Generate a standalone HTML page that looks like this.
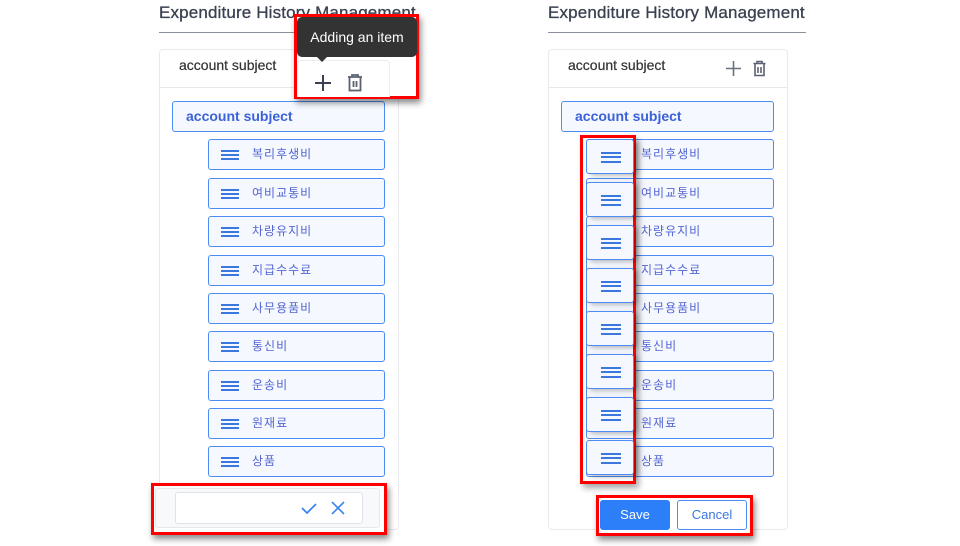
<!DOCTYPE html>
<html><head><meta charset="utf-8"><style>
*{box-sizing:border-box;margin:0;padding:0}
body{width:960px;height:546px;background:#fff;position:relative;overflow:hidden;font-family:"Liberation Sans","Noto Sans CJK KR",sans-serif}
.a{position:absolute}
.title{font-size:17px;color:#3a4150;font-weight:500;letter-spacing:0.15px;-webkit-text-stroke:0.3px #3a4150}
.line{height:1px;background:#8a909c}
.card{border:1px solid #e8eaee;border-radius:4px;background:#fff}
.hdr{font-size:14px;color:#333;-webkit-text-stroke:0.2px #333}
.hline{height:1px;background:#e6e8ec}
.parent{border:1px solid #4d8cf5;border-radius:3px;background:#f5f8fe;color:#3b62d9;font-size:14px;font-weight:bold;padding-left:13px;line-height:29px}
.child{border:1px solid #4d8cf5;border-radius:3px;background:#f5f8fe;color:#5466d2;font-size:12px;line-height:29px;letter-spacing:1px}
.ham{position:absolute;width:18px;height:10px;border-top:2px solid #3a78e0;border-bottom:2px solid #3a78e0}
.ham:after{content:"";position:absolute;left:0;right:0;top:2px;height:2px;background:#3a78e0}
.red{border:3px solid #f00;box-shadow:2px 4px 6px rgba(0,0,0,.45)}
.handle{border:1px solid #4d8cf5;border-radius:3px;background:#f5f8fe;width:48px;height:35px;box-shadow:4px 2px 5px rgba(0,0,0,.25)}
</style></head><body>

<!-- LEFT -->
<div class="a title" style="left:159px;top:3px">Expenditure History Management</div>
<div class="a line" style="left:159px;top:32px;width:256px"></div>
<div class="a card" style="left:159px;top:49px;width:240px;height:481px"></div>
<div class="a hdr" style="left:179px;top:57px">account subject</div>
<div class="a hline" style="left:160px;top:87px;width:238px"></div>
<div class="a parent" style="left:172px;top:101px;width:213px;height:31px">account subject</div>

<div class="a child" style="left:208px;top:139px;width:177px;height:31px"><span class="ham" style="left:12px;top:10px"></span><span class="a" style="left:43px">복리후생비</span></div>
<div class="a child" style="left:208px;top:178px;width:177px;height:31px"><span class="ham" style="left:12px;top:10px"></span><span class="a" style="left:43px">여비교통비</span></div>
<div class="a child" style="left:208px;top:216px;width:177px;height:31px"><span class="ham" style="left:12px;top:10px"></span><span class="a" style="left:43px">차량유지비</span></div>
<div class="a child" style="left:208px;top:255px;width:177px;height:31px"><span class="ham" style="left:12px;top:10px"></span><span class="a" style="left:43px">지급수수료</span></div>
<div class="a child" style="left:208px;top:293px;width:177px;height:31px"><span class="ham" style="left:12px;top:10px"></span><span class="a" style="left:43px">사무용품비</span></div>
<div class="a child" style="left:208px;top:331px;width:177px;height:31px"><span class="ham" style="left:12px;top:10px"></span><span class="a" style="left:43px">통신비</span></div>
<div class="a child" style="left:208px;top:370px;width:177px;height:31px"><span class="ham" style="left:12px;top:10px"></span><span class="a" style="left:43px">운송비</span></div>
<div class="a child" style="left:208px;top:408px;width:177px;height:31px"><span class="ham" style="left:12px;top:10px"></span><span class="a" style="left:43px">원재료</span></div>
<div class="a child" style="left:208px;top:446px;width:177px;height:31px"><span class="ham" style="left:12px;top:10px"></span><span class="a" style="left:43px">상품</span></div>

<!-- tooltip popup -->
<div class="a red" style="left:294px;top:14px;width:125px;height:85px;background:#fff"></div>
<div class="a" style="left:297px;top:60px;width:93px;height:37px;background:#fff;border:1px solid #eceef1;border-bottom:none;border-radius:4px 4px 0 0"></div>
<div class="a" style="left:297px;top:17px;width:120px;height:40px;background:#333;border-radius:5px;color:#fff;font-size:14px;line-height:40px;text-align:center">Adding an item</div>
<div class="a" style="left:316px;top:56px;width:0;height:0;border-left:6px solid transparent;border-right:6px solid transparent;border-top:6px solid #333"></div>
<svg class="a" style="left:313px;top:73px" width="20" height="20"><path d="M10 2V18M2 10H18" stroke="#3a4150" stroke-width="2"/></svg>
<svg class="a" style="left:346px;top:73px" width="18" height="20"><path d="M2 4H16M6 4V2H12V4M3.5 4V17.5H14.5V4M7.5 8V14M10.5 8V14" stroke="#5a6170" stroke-width="1.8" fill="none"/></svg>

<!-- bottom input -->
<div class="a red" style="left:151px;top:483px;width:236px;height:52px;background:#fff"></div>
<div class="a" style="left:155px;top:488px;width:225px;height:40px;background:#f8f9fa;border:1px solid #e6e8ec;border-radius:3px"></div>
<div class="a" style="left:175px;top:492px;width:188px;height:32px;background:#fff;border:1px solid #dfe2e6;border-radius:3px"></div>
<svg class="a" style="left:300px;top:500px" width="18" height="16"><path d="M2 8L7 13L16 4" stroke="#3a86f0" stroke-width="1.8" fill="none"/></svg>
<svg class="a" style="left:330px;top:500px" width="16" height="16"><path d="M2 2L14 14M14 2L2 14" stroke="#3a86f0" stroke-width="1.6" fill="none"/></svg>

<!-- RIGHT -->
<div class="a title" style="left:548px;top:3px">Expenditure History Management</div>
<div class="a line" style="left:548px;top:32px;width:258px"></div>
<div class="a card" style="left:548px;top:49px;width:240px;height:481px"></div>
<div class="a hdr" style="left:568px;top:57px">account subject</div>
<svg class="a" style="left:725px;top:60px" width="17" height="17"><path d="M8.5 1V16M1 8.5H16" stroke="#6a707c" stroke-width="1.6"/></svg>
<svg class="a" style="left:752px;top:60px" width="15" height="17"><path d="M1.5 3.5H13.5M5 3.5V1.5H10V3.5M3 3.5V15.5H12V3.5M6 7V13M9 7V13" stroke="#5a6170" stroke-width="1.6" fill="none"/></svg>
<div class="a hline" style="left:549px;top:87px;width:238px"></div>
<div class="a parent" style="left:561px;top:101px;width:213px;height:31px">account subject</div>

<div class="a child" style="left:586px;top:139px;width:188px;height:31px"><span class="a" style="left:54px">복리후생비</span></div>
<div class="a child" style="left:586px;top:178px;width:188px;height:31px"><span class="a" style="left:54px">여비교통비</span></div>
<div class="a child" style="left:586px;top:216px;width:188px;height:31px"><span class="a" style="left:54px">차량유지비</span></div>
<div class="a child" style="left:586px;top:255px;width:188px;height:31px"><span class="a" style="left:54px">지급수수료</span></div>
<div class="a child" style="left:586px;top:293px;width:188px;height:31px"><span class="a" style="left:54px">사무용품비</span></div>
<div class="a child" style="left:586px;top:331px;width:188px;height:31px"><span class="a" style="left:54px">통신비</span></div>
<div class="a child" style="left:586px;top:370px;width:188px;height:31px"><span class="a" style="left:54px">운송비</span></div>
<div class="a child" style="left:586px;top:408px;width:188px;height:31px"><span class="a" style="left:54px">원재료</span></div>
<div class="a child" style="left:586px;top:446px;width:188px;height:31px"><span class="a" style="left:54px">상품</span></div>

<div class="a red" style="left:580px;top:135px;width:56px;height:349px;box-shadow:3px 4px 6px rgba(0,0,0,.35)"></div>
<div class="a handle" style="left:586px;top:139px"><span class="ham" style="left:14px;top:12px;width:20px;height:11px"></span></div>
<div class="a handle" style="left:586px;top:182px"><span class="ham" style="left:14px;top:12px;width:20px;height:11px"></span></div>
<div class="a handle" style="left:586px;top:225px"><span class="ham" style="left:14px;top:12px;width:20px;height:11px"></span></div>
<div class="a handle" style="left:586px;top:268px"><span class="ham" style="left:14px;top:12px;width:20px;height:11px"></span></div>
<div class="a handle" style="left:586px;top:311px"><span class="ham" style="left:14px;top:12px;width:20px;height:11px"></span></div>
<div class="a handle" style="left:586px;top:354px"><span class="ham" style="left:14px;top:12px;width:20px;height:11px"></span></div>
<div class="a handle" style="left:586px;top:397px"><span class="ham" style="left:14px;top:12px;width:20px;height:11px"></span></div>
<div class="a handle" style="left:586px;top:440px"><span class="ham" style="left:14px;top:12px;width:20px;height:11px"></span></div>

<div class="a red" style="left:596px;top:495px;width:157px;height:41px;background:#fff"></div>
<div class="a" style="left:600px;top:500px;width:70px;height:30px;background:#2d7ff9;border-radius:3px;color:#fff;font-size:13px;line-height:30px;text-align:center">Save</div>
<div class="a" style="left:677px;top:500px;width:70px;height:30px;background:#fff;border:1px solid #4d8cf5;border-radius:3px;color:#3a78e0;font-size:13px;line-height:28px;text-align:center">Cancel</div>

</body></html>
